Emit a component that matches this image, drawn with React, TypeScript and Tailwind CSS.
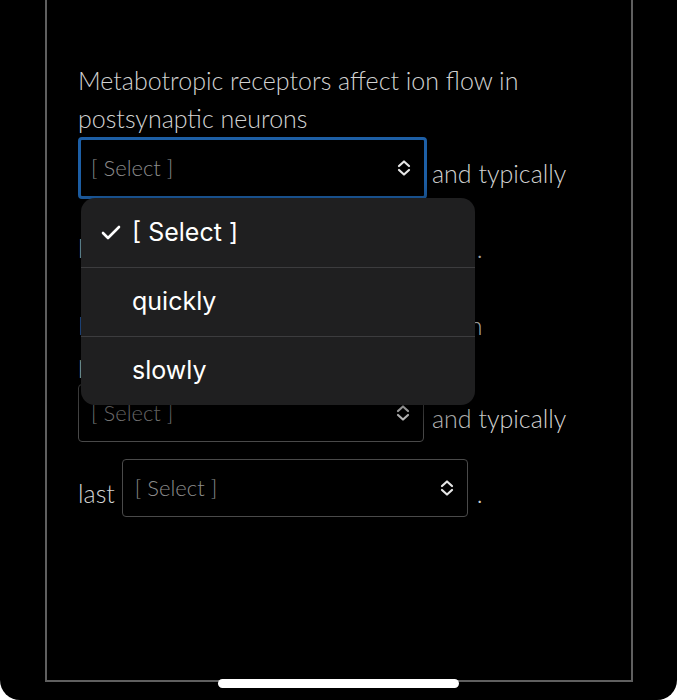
import { Check } from 'lucide-react';

const body = { fontFamily: 'Lato, "Noto Sans", sans-serif' };
const ios = { fontFamily: 'Inter, Roboto, "Noto Sans", sans-serif' };

const Chevrons = () => (
  <svg width="16" height="18" viewBox="0 0 16 18" fill="none" stroke="#e6e6e6" strokeWidth="2.2" strokeLinecap="round" strokeLinejoin="round">
    <path d="M3 7 L8 2.5 L13 7" />
    <path d="M3 11 L8 15.5 L13 11" />
  </svg>
);

const SelectBox = ({ focused = false }: { focused?: boolean }) => (
  <div
    className={
      'flex shrink-0 items-center justify-between rounded-[4px] pr-[12px] ' +
      (focused
        ? '-my-[2px] h-[62px] w-[349px] border-[3px] border-[#1d5fa6] pl-[10px]'
        : 'h-[58px] w-[346px] border border-[#4a4a4a] pl-[12px]')
    }
  >
    <span className="text-[22px] leading-[28px] font-light text-[#8c8c8c]" style={body}>
      [ Select ]
    </span>
    <Chevrons />
  </div>
);

const Question = ({ lead, focused = false }: { lead: string; focused?: boolean }) => (
  <div className="mb-[34px] text-[25px] font-light leading-[38px] text-[#d2d2d2]" style={body}>
    <p className="max-w-[530px]">{lead} postsynaptic neurons</p>
    <div className="mt-[2px] flex items-start">
      <SelectBox focused={focused} />
      <span className={'pt-[15px] ' + (focused ? 'ml-[5px]' : 'ml-[8px]')}>and typically</span>
    </div>
    <div className="mt-[17px] flex items-start">
      <span className="mr-[7px] pt-[15px]">last</span>
      <SelectBox />
      <span className="ml-[9px] pt-[15px]">.</span>
    </div>
  </div>
);

const options = ['[ Select ]', 'quickly', 'slowly'];

export default function App() {
  return (
    <div className="h-[700px] w-[677px] bg-white">
      <div className="relative h-[700px] w-[677px] overflow-hidden rounded-b-[20px] bg-black">
        <div className="ml-[45px] h-[682px] w-[588px] border-2 border-t-0 border-[#5f5f5f] pl-[31px] pt-[61px]">
          <Question lead="Metabotropic receptors affect ion flow in" focused />
          <Question lead="Ionotropic receptors affect ion flow in" />
        </div>

        <div
          className="absolute left-[81px] top-[198px] w-[394px] overflow-hidden rounded-[14px] bg-[#1f1f20] shadow-[0_8px_30px_rgba(0,0,0,0.6)]"
          style={ios}
        >
          {options.map((o, i) => (
            <div
              key={o}
              className={
                'flex h-[69px] items-center text-[25px] text-white ' + (i > 0 ? 'border-t border-[#3c3c3e]' : '')
              }
            >
              <span className="flex w-[51px] justify-end pr-[9px]">
                {i === 0 && <Check size={24} strokeWidth={2.6} color="#ffffff" />}
              </span>
              <span>{o}</span>
            </div>
          ))}
        </div>

        <div className="absolute left-[218px] top-[679px] h-[9px] w-[241px] rounded-full bg-white" />
      </div>
    </div>
  );
}
